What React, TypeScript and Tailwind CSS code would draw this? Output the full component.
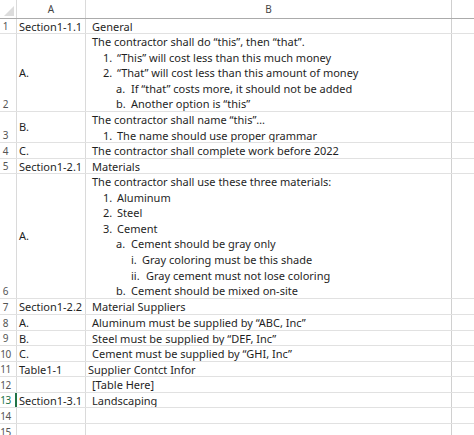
const font = { fontFamily: '"Noto Sans", "Noto Sans CJK KR", sans-serif' };

type Line = { t: string; m?: string; indent?: 0 | 1 | 2 | 3 };

type Row = { n: number; h: string; a?: string; aAlign?: 'top' | 'center'; b?: Line[]; bShift?: boolean; active?: boolean };

const rows: Row[] = [
  { n: 1, h: 'h-[15px]', a: 'Section1-1.1', b: [{ t: 'General' }] },
  {
    n: 2,
    h: 'h-[78px]',
    a: 'A.',
    aAlign: 'center',
    b: [
      { t: 'The contractor shall do “this”, then “that”.' },
      { m: '1.', t: '“This” will cost less than this much money', indent: 1 },
      { m: '2.', t: '“That” will cost less than this amount of money', indent: 1 },
      { m: 'a.', t: 'If “that” costs more, it should not be added', indent: 2 },
      { m: 'b.', t: 'Another option is “this”', indent: 2 },
    ],
  },
  {
    n: 3,
    h: 'h-[31px]',
    a: 'B.',
    aAlign: 'center',
    b: [
      { t: 'The contractor shall name “this”…' },
      { m: '1.', t: 'The name should use proper grammar', indent: 1 },
    ],
  },
  { n: 4, h: 'h-[16px]', a: 'C.', b: [{ t: 'The contractor shall complete work before 2022' }] },
  { n: 5, h: 'h-[15px]', a: 'Section1-2.1', b: [{ t: 'Materials' }] },
  {
    n: 6,
    h: 'h-[125px]',
    a: 'A.',
    aAlign: 'center',
    b: [
      { t: 'The contractor shall use these three materials:' },
      { m: '1.', t: 'Aluminum', indent: 1 },
      { m: '2.', t: 'Steel', indent: 1 },
      { m: '3.', t: 'Cement', indent: 1 },
      { m: 'a.', t: 'Cement should be gray only', indent: 2 },
      { m: 'i.', t: 'Gray coloring must be this shade', indent: 3 },
      { m: 'ii.', t: 'Gray cement must not lose coloring', indent: 3 },
      { m: 'b.', t: 'Cement should be mixed on-site', indent: 2 },
    ],
  },
  { n: 7, h: 'h-[16px]', a: 'Section1-2.2', b: [{ t: 'Material Suppliers' }] },
  { n: 8, h: 'h-[16px]', a: 'A.', b: [{ t: 'Aluminum must be supplied by “ABC, Inc”' }] },
  { n: 9, h: 'h-[15px]', a: 'B.', b: [{ t: 'Steel must be supplied by “DEF, Inc”' }] },
  { n: 10, h: 'h-[16px]', a: 'C.', b: [{ t: 'Cement must be supplied by “GHI, Inc”' }] },
  { n: 11, h: 'h-[15px]', a: 'Table1-1', b: [{ t: 'Supplier Contct Infor' }], bShift: true },
  { n: 12, h: 'h-[16px]', b: [{ t: '[Table Here]' }] },
  { n: 13, h: 'h-[15px]', a: 'Section1-3.1', b: [{ t: 'Landscaping' }], active: true },
  { n: 14, h: 'h-[16px]' },
  { n: 15, h: 'h-[16px]' },
];

function BLine({ line }: { line: Line }) {
  if (!line.m) return <div className="whitespace-nowrap">{line.t}</div>;
  const pad = line.indent === 1 ? 'pl-[11px]' : line.indent === 2 ? 'pl-[24px]' : 'pl-[39px]';
  const mark = line.indent === 3 ? (line.m === 'ii.' ? 'w-[15px]' : 'w-[11px]') : line.indent === 2 ? 'w-[15px]' : 'w-[14px]';
  return (
    <div className={`flex whitespace-nowrap ${pad}`}>
      <span className={`shrink-0 ${mark}`}>{line.m}</span>
      <span>{line.t}</span>
    </div>
  );
}

export default function App() {
  return (
    <div className="h-[435px] w-[474px] overflow-hidden bg-white text-[11px] leading-[15.6px] text-[#1f1f1f]" style={font}>
      <div className="grid h-[19px] grid-cols-[17px_69px_366px_1fr] border-b border-[#ababab] text-[10px] text-[#444]">
        <div className="relative border-r border-[#dadada]">
          <svg className="absolute bottom-[2px] right-[2px]" width="10" height="10" viewBox="0 0 10 10">
            <polygon points="10,0 10,10 0,10" fill="#dcdcdc" />
          </svg>
        </div>
        <div className="flex items-center justify-center border-r border-[#dadada] pt-[2px]">A</div>
        <div className="flex items-center justify-center border-r border-[#cfcfcf] pt-[2px]">B</div>
        <div />
      </div>
      {rows.map((r) => (
        <div key={r.n} className={`grid grid-cols-[17px_69px_366px_1fr] border-b border-[#e1e1e1] ${r.h}`}>
          <div
            className={`flex items-end overflow-hidden border-r text-[10px] leading-[13px] ${
              r.active ? 'border-r-2 border-[#217346] text-[#217346]' : 'border-[#dadada] text-[#555]'
            }`}
          >
            <span className={`block w-[11px] text-center ${r.n >= 10 ? 'tracking-[-0.5px]' : ''}`}>{r.n}</span>
          </div>
          <div
            className={`flex overflow-hidden whitespace-nowrap border-r border-[#dadada] pl-[2px] ${
              r.aAlign === 'center' ? 'items-center' : 'items-start'
            }`}
          >
            {r.a}
          </div>
          <div className={`overflow-hidden border-r border-[#d0d0d0] ${r.bShift ? 'pl-[2px]' : 'pl-[6px]'}`}>
            {r.b?.map((l, i) => <BLine key={i} line={l} />)}
          </div>
          <div />
        </div>
      ))}
    </div>
  );
}
